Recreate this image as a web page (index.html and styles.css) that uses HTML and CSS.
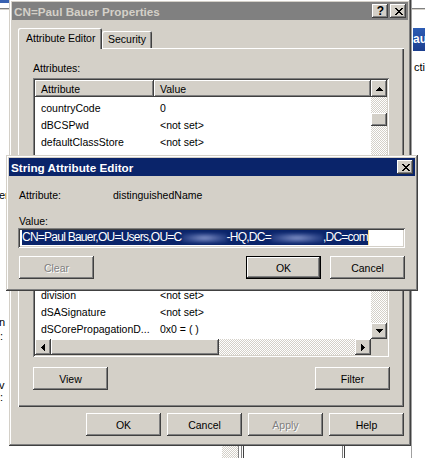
FILE: index.html
```html
<!DOCTYPE html>
<html>
<head>
<meta charset="utf-8">
<title>CN=Paul Bauer Properties</title>
<link rel="stylesheet" href="styles.css">
</head>
<body>
<div class="desktop">
  <!-- bits of other windows peeking out behind the dialogs -->
  <div class="bg bg-bar-tl"></div>
  <div class="bg bg-rule-tl"></div>
  <div class="bg bg-rule-tr"></div>
  <div class="bg bg-edge-r"></div>
  <div class="bg bg-head-r"><span>au</span></div>
  <div class="bg bg-text bg-ctio">ctio</div>
  <div class="bg bg-text bg-er">er</div>
  <div class="bg bg-text bg-n">n</div>
  <div class="bg bg-text bg-c1">:</div>
  <div class="bg bg-text bg-v">v</div>
  <div class="bg bg-text bg-c2">:</div>
  <div class="bg bg-check-b"></div>
  <div class="bg bg-line-b1"></div>
  <div class="bg bg-line-b2"></div>

  <!-- Properties window -->
  <div class="window props">
    <div class="caption inactive">
      <span class="caption-text">CN=Paul Bauer Properties</span>
      <div class="caption-btns">
        <span class="cbtn raised help">?</span>
        <span class="cbtn raised close">
          <svg width="8" height="7" viewBox="0 0 8 7" shape-rendering="crispEdges"><path d="M0 0h2v1H0zM6 0h2v1H6zM1 1h2v1H1zM5 1h2v1H5zM2 2h4v1H2zM3 3h2v1H3zM2 4h4v1H2zM1 5h2v1H1zM5 5h2v1H5zM0 6h2v1H0zM6 6h2v1H6z" fill="#000"/></svg>
        </span>
      </div>
    </div>

    <div class="tabs">
      <div class="tab active">Attribute Editor</div>
      <div class="tab">Security</div>
    </div>

    <div class="panel">
      <div class="label">Attributes:</div>
      <div class="listview">
        <div class="lv-main">
          <div class="lv-header">
            <div class="hcol raised c1">Attribute</div>
            <div class="hcol raised c2">Value</div>
          </div>
          <div class="lv-rows">
            <div class="row"><span class="c1">countryCode</span><span class="c2">0</span></div>
            <div class="row"><span class="c1">dBCSPwd</span><span class="c2">&lt;not set&gt;</span></div>
            <div class="row"><span class="c1">defaultClassStore</span><span class="c2">&lt;not set&gt;</span></div>
            <div class="row"><span class="c1">department</span><span class="c2">Information Technology</span></div>
            <div class="row"><span class="c1">departmentNumber</span><span class="c2">&lt;not set&gt;</span></div>
            <div class="row"><span class="c1">description</span><span class="c2">&lt;not set&gt;</span></div>
            <div class="row"><span class="c1">desktopProfile</span><span class="c2">&lt;not set&gt;</span></div>
            <div class="row"><span class="c1">destinationIndicator</span><span class="c2">&lt;not set&gt;</span></div>
            <div class="row"><span class="c1">displayName</span><span class="c2">Paul Bauer</span></div>
            <div class="row"><span class="c1">displayNamePrintable</span><span class="c2">&lt;not set&gt;</span></div>
            <div class="row"><span class="c1">distinguishedName</span><span class="c2">CN=Paul Bauer,OU=Users</span></div>
            <div class="row"><span class="c1">division</span><span class="c2">&lt;not set&gt;</span></div>
            <div class="row"><span class="c1">dSASignature</span><span class="c2">&lt;not set&gt;</span></div>
            <div class="row"><span class="c1">dSCorePropagationD...</span><span class="c2">0x0 = (  )</span></div>
            <div class="row"><span class="c1">dynamicLDAPServer</span><span class="c2">&lt;not set&gt;</span></div>
          </div>
        </div>
        <div class="vscroll">
          <span class="sbtn raised"><svg width="7" height="4" viewBox="0 0 7 4" shape-rendering="crispEdges"><path d="M3 0h1v1H3zM2 1h3v1H2zM1 2h5v1H1zM0 3h7v1H0z" fill="#000"/></svg></span>
          <span class="track v-top"></span>
          <span class="thumb raised v-thumb"></span>
          <span class="track"></span>
          <span class="sbtn raised"><svg width="7" height="4" viewBox="0 0 7 4" shape-rendering="crispEdges"><path d="M0 0h7v1H0zM1 1h5v1H1zM2 2h3v1H2zM3 3h1v1H3z" fill="#000"/></svg></span>
        </div>
        <div class="hscroll">
          <span class="sbtn raised"><svg width="4" height="7" viewBox="0 0 4 7" shape-rendering="crispEdges"><path d="M3 0h1v7H3zM2 1h1v5H2zM1 2h1v3H1zM0 3h1v1H0z" fill="#000"/></svg></span>
          <span class="thumb raised h-thumb"></span>
          <span class="track"></span>
          <span class="sbtn raised"><svg width="4" height="7" viewBox="0 0 4 7" shape-rendering="crispEdges"><path d="M0 0h1v7H0zM1 1h1v5H1zM2 2h1v3H2zM3 3h1v1H3z" fill="#000"/></svg></span>
        </div>
        <div class="corner"></div>
      </div>
      <div class="panel-btns">
        <span class="btn raised">View</span>
        <span class="btn raised">Filter</span>
      </div>
    </div>

    <div class="dlg-btns">
      <span class="btn raised">OK</span>
      <span class="btn raised">Cancel</span>
      <span class="btn raised disabled">Apply</span>
      <span class="btn raised">Help</span>
    </div>
  </div>

  <!-- String Attribute Editor dialog -->
  <div class="window editor">
    <div class="caption active-cap">
      <span class="caption-text">String Attribute Editor</span>
      <div class="caption-btns">
        <span class="cbtn raised close">
          <svg width="8" height="7" viewBox="0 0 8 7" shape-rendering="crispEdges"><path d="M0 0h2v1H0zM6 0h2v1H6zM1 1h2v1H1zM5 1h2v1H5zM2 2h4v1H2zM3 3h2v1H3zM2 4h4v1H2zM1 5h2v1H1zM5 5h2v1H5zM0 6h2v1H0zM6 6h2v1H6z" fill="#000"/></svg>
        </span>
      </div>
    </div>
    <div class="ed-body">
      <div class="ed-row">
        <span class="ed-label">Attribute:</span>
        <span>distinguishedName</span>
      </div>
      <div class="ed-value-label">Value:</div>
      <div class="textbox sunken">
        <span class="sel">CN=Paul Bauer,OU=Users,OU=C<span class="smudge s1"></span> -HQ,DC=<span class="smudge s2"></span>,DC=com</span><span class="caret"></span>
      </div>
      <div class="ed-btns">
        <span class="btn raised disabled">Clear</span>
        <span class="spacer"></span>
        <span class="btn default">OK</span>
        <span class="btn raised">Cancel</span>
      </div>
    </div>
  </div>
</div>
</body>
</html>
```

FILE: styles.css
```css
* { box-sizing: border-box; }

html, body {
  margin: 0;
  padding: 0;
}

body {
  width: 425px;
  height: 458px;
  overflow: hidden;
  background: #fff;
  font-family: "Liberation Sans", Arial, sans-serif;
  font-size: 10.5px;
  color: #000;
}

.desktop {
  position: relative;
  width: 425px;
  height: 458px;
  overflow: hidden;
}

/* ---- classic 3D edges ---- */
.raised {
  background: #d4d0c8;
  box-shadow: inset -1px -1px #404040, inset 1px 1px #fff,
              inset -2px -2px #808080, inset 2px 2px #d4d0c8;
}
.sunken {
  background: #fff;
  box-shadow: inset 1px 1px #808080, inset -1px -1px #fff,
              inset 2px 2px #404040, inset -2px -2px #d4d0c8;
}

/* ---- background windows ---- */
.bg { position: absolute; }
.bg-bar-tl { left: 0; top: 0; width: 9px; height: 3px; background: #3a62b0; }
.bg-rule-tl { left: 0; top: 8px; width: 9px; height: 2px; border-top: 1px solid #808080; border-bottom: 1px solid #d4d0c8; }
.bg-rule-tr { left: 412px; top: 8px; width: 13px; height: 2px; border-top: 1px solid #808080; border-bottom: 1px solid #d4d0c8; }
.bg-edge-r { left: 411px; top: 0; width: 2px; height: 458px; border-left: 1px solid #a0a0a0; }
.bg-head-r {
  left: 413px; top: 28px; width: 12px; height: 23px;
  background: linear-gradient(#2d5cb4, #1c3f8f);
  color: #fff; font-weight: bold; font-size: 12px;
  line-height: 23px; overflow: hidden; white-space: nowrap;
}
.bg-text { font-size: 11px; line-height: 13px; white-space: nowrap; }
.bg-ctio { left: 414px; top: 61px; }
.bg-er { left: -1px; top: 189px; }
.bg-n { left: -1px; top: 316px; }
.bg-c1 { left: 0; top: 330px; }
.bg-v { left: -1px; top: 379px; }
.bg-c2 { left: 0; top: 391px; }
.bg-check-b {
  left: 222px; top: 446px; width: 17px; height: 12px;
  background: repeating-conic-gradient(#d4d0c8 0 25%, #fff 0 50%) 0 0 / 2px 2px;
  border-right: 1px solid #808080;
}
.bg-line-b1 { left: 241px; top: 446px; width: 3px; height: 12px; border-left: 1px solid #808080; border-right: 1px solid #404040; }
.bg-line-b2 { left: 342px; top: 446px; width: 3px; height: 12px; border-left: 1px solid #808080; border-right: 1px solid #404040; }

/* ---- windows ---- */
.window {
  position: absolute;
  background: #d4d0c8;
  padding: 3px;
  display: flex;
  flex-direction: column;
  box-shadow: inset -1px -1px #404040, inset 1px 1px #d4d0c8,
              inset -2px -2px #808080, inset 2px 2px #fff;
}
.props { left: 9px; top: -1px; width: 402px; height: 447px; }
.editor { left: 6px; top: 155px; width: 412px; height: 136px; z-index: 2; }

.caption {
  height: 18px;
  flex: none;
  display: flex;
  align-items: center;
  justify-content: space-between;
  padding: 0 2px 0 2px;
}
.caption.inactive { background: #808080; color: #d4d0c8; }
.caption.active-cap { background: #0a246a; color: #fff; }
.caption-text { font-weight: bold; font-size: 11.7px; white-space: nowrap; }
.caption-btns { display: flex; gap: 2px; }
.cbtn {
  width: 16px; height: 14px;
  display: flex; align-items: center; justify-content: center;
}
.cbtn.help { font-weight: bold; font-size: 12px; line-height: 14px; color: #000; padding-left: 1px; }
.cbtn svg { display: block; margin-left: 1px; }

/* ---- tabs ---- */
.tabs {
  display: flex;
  align-items: flex-end;
  height: 20px;
  margin: 8px 0 0 6px;
  flex: none;
  position: relative;
  z-index: 1;
}
.tab {
  height: 17px;
  padding: 0 6px;
  line-height: 17px;
  background: #d4d0c8;
  box-shadow: inset 1px 1px #fff, inset -1px 0 #404040, inset -2px 0 #808080;
  border-radius: 2px 2px 0 0;
}
.tab.active {
  height: 21px;
  width: 84px;
  margin-bottom: -1px;
  padding-left: 8px;
  line-height: 20px;
}

.panel {
  flex: none;
  width: 386px;
  height: 359px;
  margin-left: 6px;
  padding: 14px 15px 0;
  box-shadow: inset 1px 1px #fff, inset -1px -1px #404040, inset -2px -2px #808080;
  display: flex;
  flex-direction: column;
}
.label { height: 13px; line-height: 13px; }

/* ---- list view ---- */
.listview {
  margin-top: 3px;
  width: 356px;
  height: 279px;
  padding: 2px;
  background: #fff;
  box-shadow: inset 1px 1px #808080, inset -1px -1px #fff,
              inset 2px 2px #404040, inset -2px -2px #d4d0c8;
  display: grid;
  grid-template-columns: 336px 16px;
  grid-template-rows: 259px 16px;
}
.lv-main { overflow: hidden; }
.lv-header { display: flex; height: 17px; }
.hcol { height: 17px; line-height: 18px; padding-left: 6px; white-space: nowrap; }
.hcol.c1 { width: 119px; }
.hcol.c2 { width: 217px; }
.lv-rows { padding-top: 3px; }
.row { display: flex; height: 17px; line-height: 17px; white-space: nowrap; }
.row .c1 { width: 119px; padding-left: 6px; overflow: hidden; }
.row .c2 { padding-left: 6px; }

.vscroll { display: flex; flex-direction: column; }
.hscroll { display: flex; }
.sbtn {
  width: 16px; height: 16px; flex: none;
  display: flex; align-items: center; justify-content: center;
}
.vscroll .sbtn:first-child { height: 17px; }
.track {
  flex: 1;
  background: repeating-conic-gradient(#d4d0c8 0 25%, #fff 0 50%) 0 0 / 2px 2px;
}
.track.v-top { flex: none; height: 16px; }
.v-thumb { height: 13px; flex: none; }
.h-thumb { width: 168px; flex: none; }
.corner { background: #d4d0c8; }

.panel-btns {
  margin-top: 10px;
  display: flex;
  justify-content: space-between;
  width: 357px;
}

/* ---- push buttons ---- */
.btn {
  width: 75px;
  height: 23px;
  display: flex;
  align-items: center;
  justify-content: center;
  flex: none;
}
.btn.disabled { color: #808080; text-shadow: 1px 1px #fff; }
.btn.default {
  background: #d4d0c8;
  border: 1px solid #000;
  box-shadow: inset -1px -1px #404040, inset 1px 1px #fff,
              inset -2px -2px #808080;
}

.dlg-btns {
  margin-top: 6px;
  padding-right: 4px;
  display: flex;
  justify-content: flex-end;
  gap: 6px;
}

/* ---- String Attribute Editor ---- */
.ed-body {
  flex: 1;
  padding: 13px 0 0 10px;
  display: flex;
  flex-direction: column;
}
.ed-row { display: flex; height: 13px; line-height: 13px; }
.ed-label { width: 94px; }
.ed-value-label { margin-top: 13px; height: 13px; line-height: 13px; }
.textbox {
  margin: 0 0 0 -1px;
  width: 387px;
  height: 20px;
  padding: 2px 0 0 4px;
  display: flex;
  align-items: flex-start;
  white-space: nowrap;
  font-size: 12px;
  letter-spacing: -0.75px;
}
.sel {
  background: #0a246a;
  color: #fff;
  height: 15px;
  line-height: 15px;
  display: inline-flex;
  align-items: center;
}
.smudge {
  display: inline-block;
  height: 10px;
  background: radial-gradient(ellipse at center, rgba(165,178,225,0.8), rgba(110,130,195,0.35) 60%, rgba(10,36,106,0) 100%);
  filter: blur(1.5px);
}
.s1 { width: 45px; }
.s2 { width: 52px; }
.caret { width: 1px; height: 15px; background: #f5d98a; }

.ed-btns {
  margin-top: 8px;
  display: flex;
  width: 386px;
  gap: 9px;
}
.ed-btns .spacer { flex: 1; }
```
